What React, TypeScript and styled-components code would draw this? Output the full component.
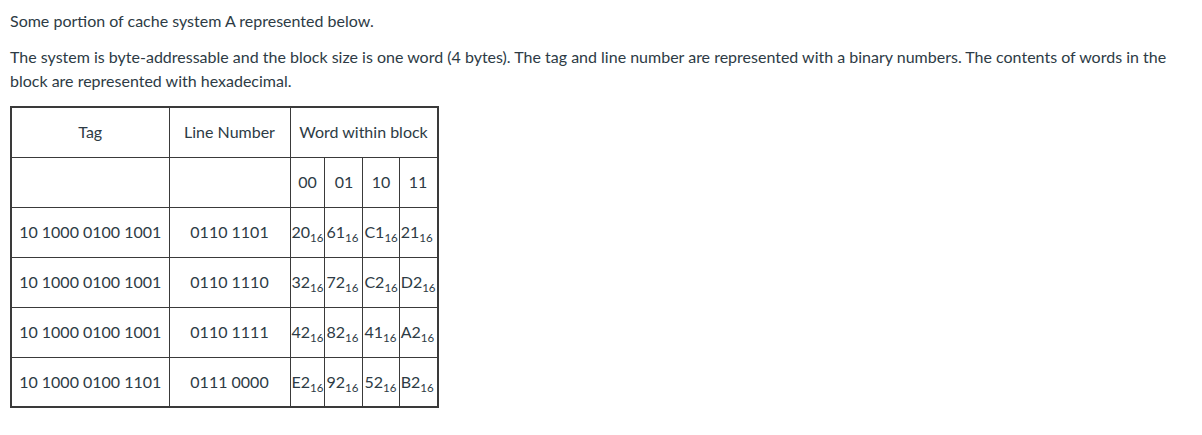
import React from "react";
import styled, { createGlobalStyle } from "styled-components";

const GlobalStyle = createGlobalStyle`
  body {
    margin: 0;
    background: #fff;
    font-family: Lato, "Open Sans", "Liberation Sans", sans-serif;
    color: #2d3b45;
  }
`;

const Page = styled.div`
  padding: 9px 10px;
  font-size: 16px;
  line-height: 24px;
`;

const Para = styled.p`
  margin: 0 0 12px;
`;

const Table = styled.table`
  margin-top: 13px;
  border-collapse: collapse;
  border: 2px solid #3a3a3a;
  table-layout: fixed;
`;

const Cell = styled.td<{ $tight?: boolean }>`
  border: 1px solid #3a3a3a;
  height: 50px;
  box-sizing: border-box;
  padding: 0 ${p => (p.$tight ? "0 0 0 1px" : "6px")};
  text-align: ${p => (p.$tight ? "left" : "center")};
  vertical-align: middle;
  white-space: nowrap;
  font-size: 16px;
`;

const Sub = styled.sub`
  font-size: 11.5px;
  vertical-align: -4px;
  line-height: 0;
`;

const HeadNum = styled.span`
  display: block;
  text-align: center;
`;

const rows = [
  { tag: "10 1000 0100 1001", line: "0110 1101", words: ["20", "61", "C1", "21"] },
  { tag: "10 1000 0100 1001", line: "0110 1110", words: ["32", "72", "C2", "D2"] },
  { tag: "10 1000 0100 1001", line: "0110 1111", words: ["42", "82", "41", "A2"] },
  { tag: "10 1000 0100 1101", line: "0111 0000", words: ["E2", "92", "52", "B2"] },
];

const wordCols = [34, 38, 36, 38];

export default function App() {
  return (
    <Page>
      <GlobalStyle />
      <Para>Some portion of cache system A represented below.</Para>
      <Para>
        The system is byte-addressable and the block size is one word (4 bytes). The tag and line number are
        represented with a binary numbers. The contents of words in the block are represented with hexadecimal.
      </Para>
      <Table>
        <colgroup>
          <col style={{ width: 158 }} />
          <col style={{ width: 121 }} />
          {wordCols.map((w, i) => (
            <col key={i} style={{ width: w }} />
          ))}
        </colgroup>
        <tbody>
          <tr>
            <Cell>Tag</Cell>
            <Cell>Line Number</Cell>
            <Cell colSpan={4}>Word within block</Cell>
          </tr>
          <tr>
            <Cell />
            <Cell />
            {["00", "01", "10", "11"].map(w => (
              <Cell key={w} $tight>
                <HeadNum>{w}</HeadNum>
              </Cell>
            ))}
          </tr>
          {rows.map((r, i) => (
            <tr key={i}>
              <Cell>{r.tag}</Cell>
              <Cell>{r.line}</Cell>
              {r.words.map((w, j) => (
                <Cell key={j} $tight>
                  {w}
                  <Sub>16</Sub>
                </Cell>
              ))}
            </tr>
          ))}
        </tbody>
      </Table>
    </Page>
  );
}
